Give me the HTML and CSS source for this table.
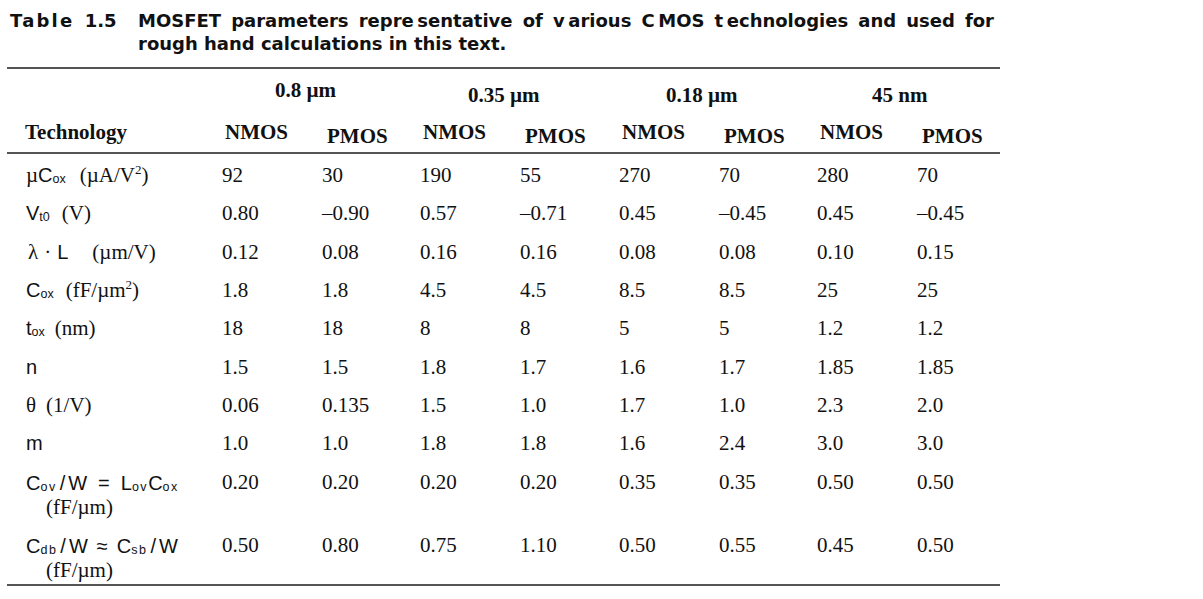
FILE: index.html
```html
<!DOCTYPE html>
<html>
<head>
<meta charset="utf-8">
<link rel="stylesheet" href="styles.css">
</head>
<body>
<div class="page">
  <header class="caption">
    <div class="cap-label"><span class="cap-word">Table</span> 1.5</div>
    <p class="cap-text">MOSFET parameters repre&thinsp;sentative of v&thinsp;arious C&thinsp;MOS t&thinsp;echnologies and used for rough hand calculations in this text.</p>
  </header>

  <div class="table">
    <div class="thead">
      <div class="row group">
        <div class="cell"></div>
        <div class="cell span2 g1">0.8 µm</div>
        <div class="cell span2 g2">0.35 µm</div>
        <div class="cell span2 g3">0.18 µm</div>
        <div class="cell span2 g4">45 nm</div>
      </div>
      <div class="row colhead">
        <div class="cell label">Technology</div>
        <div class="cell nm">NMOS</div><div class="cell pm">PMOS</div>
        <div class="cell nm">NMOS</div><div class="cell pm">PMOS</div>
        <div class="cell nm">NMOS</div><div class="cell pm">PMOS</div>
        <div class="cell nm">NMOS</div><div class="cell pm">PMOS</div>
      </div>
    </div>

    <div class="tbody">
      <div class="row data">
        <div class="cell label">µ<span class="sans">C</span><span class="sb">ox</span><span class="unit u14">(µA/V<span class="sp">2</span>)</span></div>
        <div class="cell">92</div><div class="cell">30</div><div class="cell">190</div><div class="cell">55</div>
        <div class="cell">270</div><div class="cell">70</div><div class="cell">280</div><div class="cell">70</div>
      </div>
      <div class="row data">
        <div class="cell label"><span class="sans">V</span><span class="sb">t0</span><span class="unit u12">(V)</span></div>
        <div class="cell">0.80</div><div class="cell">–0.90</div><div class="cell">0.57</div><div class="cell">–0.71</div>
        <div class="cell">0.45</div><div class="cell">–0.45</div><div class="cell">0.45</div><div class="cell">–0.45</div>
      </div>
      <div class="row data">
        <div class="cell label"><span class="lam">λ</span><span class="dot">·</span><span class="sans">L</span><span class="unit u24">(µm/V)</span></div>
        <div class="cell">0.12</div><div class="cell">0.08</div><div class="cell">0.16</div><div class="cell">0.16</div>
        <div class="cell">0.08</div><div class="cell">0.08</div><div class="cell">0.10</div><div class="cell">0.15</div>
      </div>
      <div class="row data">
        <div class="cell label"><span class="sans">C</span><span class="sb">ox</span><span class="unit u12">(fF/µm<span class="sp">2</span>)</span></div>
        <div class="cell">1.8</div><div class="cell">1.8</div><div class="cell">4.5</div><div class="cell">4.5</div>
        <div class="cell">8.5</div><div class="cell">8.5</div><div class="cell">25</div><div class="cell">25</div>
      </div>
      <div class="row data">
        <div class="cell label"><span class="sans">t</span><span class="sb">ox</span><span class="unit u10">(nm)</span></div>
        <div class="cell">18</div><div class="cell">18</div><div class="cell">8</div><div class="cell">8</div>
        <div class="cell">5</div><div class="cell">5</div><div class="cell">1.2</div><div class="cell">1.2</div>
      </div>
      <div class="row data">
        <div class="cell label"><span class="sans">n</span></div>
        <div class="cell">1.5</div><div class="cell">1.5</div><div class="cell">1.8</div><div class="cell">1.7</div>
        <div class="cell">1.6</div><div class="cell">1.7</div><div class="cell">1.85</div><div class="cell">1.85</div>
      </div>
      <div class="row data">
        <div class="cell label">θ<span class="unit u10">(1/V)</span></div>
        <div class="cell">0.06</div><div class="cell">0.135</div><div class="cell">1.5</div><div class="cell">1.0</div>
        <div class="cell">1.7</div><div class="cell">1.0</div><div class="cell">2.3</div><div class="cell">2.0</div>
      </div>
      <div class="row data">
        <div class="cell label"><span class="sans">m</span></div>
        <div class="cell">1.0</div><div class="cell">1.0</div><div class="cell">1.8</div><div class="cell">1.8</div>
        <div class="cell">1.6</div><div class="cell">2.4</div><div class="cell">3.0</div><div class="cell">3.0</div>
      </div>
      <div class="row data tall">
        <div class="cell label"><span class="sans">C</span><span class="sb">ov</span><span class="sans sl">/</span><span class="sans">W</span><span class="sans op">=</span><span class="sans">L</span><span class="sb">ov</span><span class="sans">C</span><span class="sb">ox</span><br><span class="indent">(fF/µm)</span></div>
        <div class="cell">0.20</div><div class="cell">0.20</div><div class="cell">0.20</div><div class="cell">0.20</div>
        <div class="cell">0.35</div><div class="cell">0.35</div><div class="cell">0.50</div><div class="cell">0.50</div>
      </div>
      <div class="row data last">
        <div class="cell label"><span class="sans">C</span><span class="sb">db</span><span class="sans sl">/</span><span class="sans">W</span><span class="sans ap">≈</span><span class="sans">C</span><span class="sb">sb</span><span class="sans sl">/</span><span class="sans">W</span><br><span class="indent">(fF/µm)</span></div>
        <div class="cell">0.50</div><div class="cell">0.80</div><div class="cell">0.75</div><div class="cell">1.10</div>
        <div class="cell">0.50</div><div class="cell">0.55</div><div class="cell">0.45</div><div class="cell">0.50</div>
      </div>
    </div>
  </div>
</div>
</body>
</html>
```

FILE: styles.css
```css
html, body {
  margin: 0;
  padding: 0;
  background: #ffffff;
}

.page {
  padding: 0 0 0 7px;
  width: 993px;
  color: #111;
}

/* caption */
.caption {
  display: flex;
  align-items: flex-start;
  font-family: "DejaVu Sans", sans-serif;
  font-weight: bold;
  font-size: 18px;
  line-height: 23px;
  color: #111;
  padding-top: 9px;
  height: 58px;
}
.cap-label {
  width: 131px;
  flex: none;
  padding-left: 3px;
  box-sizing: border-box;
  white-space: nowrap;
  word-spacing: 4px;
}
.cap-word {
  letter-spacing: 2.2px;
}
.cap-text {
  margin: 0;
  width: 856px;
  text-align: justify;
}

/* table */
.table {
  font-family: "Liberation Serif", "Times New Roman", serif;
  font-size: 21px;
  line-height: 23px;
  color: #111;
}
.thead {
  border-top: 2px solid #555;
  border-bottom: 2px solid #555;
}
.row {
  display: grid;
  grid-template-columns: 215px 100px 98px 100px 99px 100px 98px 100px 83px;
}
.cell {
  white-space: nowrap;
}
.span2 {
  grid-column: span 2;
}
.group {
  height: 52px;
  font-weight: bold;
}
.g1 { padding: 10px 0 0 53px; }
.g2 { padding: 15px 0 0 48px; }
.g3 { padding: 15px 0 0 47px; }
.g4 { padding: 15px 0 0 55px; }

.colhead {
  height: 31px;
  font-weight: bold;
}
.colhead .label { padding-left: 18px; }
.colhead .nm { padding-left: 3px; }
.colhead .pm { padding: 4px 0 0 5px; }

.tbody .label {
  padding-left: 19px;
}

.tbody {
  padding-top: 10px;
  border-bottom: 2px solid #555;
}
.data {
  height: 38.33px;
}
.data.tall {
  height: 63px;
}
.data.last {
  height: 50px;
}
.tall .label, .last .label {
  line-height: 24px;
}

.sans {
  font-family: "Liberation Sans", Arial, sans-serif;
  font-size: 20px;
}
.sb {
  font-family: "Liberation Sans", Arial, sans-serif;
  font-size: 12.5px;
  vertical-align: -1px;
  line-height: 0;
}
.tall .sb, .last .sb {
  letter-spacing: 1.5px;
}
.sp {
  font-size: 13px;
  vertical-align: 8px;
  line-height: 0;
}
.unit { display: inline-block; }
.u10 { margin-left: 10px; }
.u12 { margin-left: 12px; }
.u14 { margin-left: 14px; }
.u24 { margin-left: 24px; }

.lam { margin-left: 2px; }
.dot { margin: 0 6px; }
.sl { margin: 0 3px; }
.op { margin: 0 11px; }
.ap { margin: 0 9px; }

.indent {
  padding-left: 20px;
}
```
